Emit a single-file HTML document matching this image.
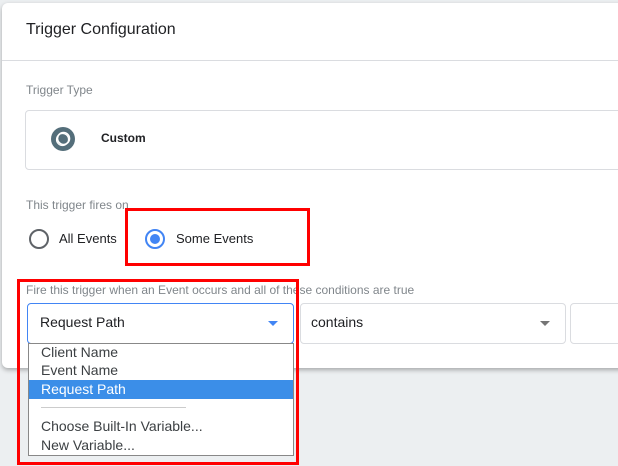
<!DOCTYPE html>
<html><head><style>
body{margin:0;width:618px;height:466px;background:#eceff1;font-family:"Liberation Sans",sans-serif;position:relative;overflow:hidden}
.a{position:absolute}
.card{left:2px;top:3px;width:640px;height:365px;background:#fff;border-radius:6px;box-shadow:0 2px 5px rgba(0,0,0,.3)}
.red{border:3px solid #f00;box-sizing:border-box}
.sel{border:1px solid #dadce0;border-radius:4px;box-sizing:border-box;background:#fff}
.lbl{color:#80868b;font-size:12px}
.it{left:12px;font-size:14px;color:#3c4043}
</style></head><body>
<div class="a card"></div>
<div class="a" style="left:26px;top:21px;font-size:16px;color:#202124">Trigger Configuration</div>
<div class="a" style="left:2px;top:60px;width:620px;height:1px;background:#dadce0"></div>
<div class="a lbl" style="left:26px;top:83px">Trigger Type</div>
<div class="a sel" style="left:25px;top:110px;width:620px;height:60px"></div>
<div class="a" style="left:51px;top:127px;width:24px;height:24px;border-radius:50%;background:#546e7a"></div>
<svg class="a" style="left:51px;top:127px" width="24" height="24"><circle cx="12.5" cy="11.5" r="6" fill="none" stroke="#fff" stroke-width="1.6"/><circle cx="11.5" cy="12.5" r="6" fill="none" stroke="#fff" stroke-width="1.2"/></svg>
<div class="a" style="left:101px;top:131px;font-size:12px;font-weight:bold;color:#202124">Custom</div>
<div class="a lbl" style="left:26px;top:198px">This trigger fires on</div>
<div class="a" style="left:29px;top:229px;width:16px;height:16px;border:2px solid #5f6368;border-radius:50%"></div>
<div class="a" style="left:59px;top:231px;font-size:13px;color:#202124">All Events</div>
<div class="a" style="left:145px;top:229px;width:16px;height:16px;border:2px solid #4285f4;border-radius:50%"></div>
<div class="a" style="left:150px;top:234px;width:10px;height:10px;background:#4285f4;border-radius:50%"></div>
<div class="a" style="left:176px;top:231px;font-size:13px;color:#202124">Some Events</div>
<div class="a red" style="left:125px;top:208px;width:185px;height:58px"></div>
<div class="a lbl" style="left:26px;top:283px">Fire this trigger when an Event occurs and all of these conditions are true</div>
<div class="a sel" style="left:27px;top:303px;width:267px;height:41px;border-color:#4285f4"></div>
<div class="a" style="left:40px;top:314px;font-size:14px;color:#202124">Request Path</div>
<div class="a" style="left:268px;top:321px;border:5px solid transparent;border-top:5px solid #4285f4;border-bottom:0"></div>
<div class="a sel" style="left:300px;top:303px;width:266px;height:41px"></div>
<div class="a" style="left:311px;top:314px;font-size:14px;color:#202124">contains</div>
<div class="a" style="left:540px;top:321px;border:5px solid transparent;border-top:5px solid #757575;border-bottom:0"></div>
<div class="a sel" style="left:570px;top:303px;width:60px;height:41px"></div>
<div class="a" style="left:28px;top:343px;width:266px;height:113px;background:#fff;border:1px solid #888;box-sizing:border-box">
<div class="a it" style="top:0">Client Name</div>
<div class="a it" style="top:18px">Event Name</div>
<div class="a" style="left:0;top:36px;width:264px;height:19px;background:#3b8ee8"></div>
<div class="a it" style="top:37px;color:#fff">Request Path</div>
<div class="a" style="left:12px;top:63px;width:145px;height:1px;background:#ccc"></div>
<div class="a it" style="top:74px">Choose Built-In Variable...</div>
<div class="a it" style="top:93px">New Variable...</div>
</div>
<div class="a red" style="left:17px;top:279px;width:282px;height:186px"></div>
</body></html>
